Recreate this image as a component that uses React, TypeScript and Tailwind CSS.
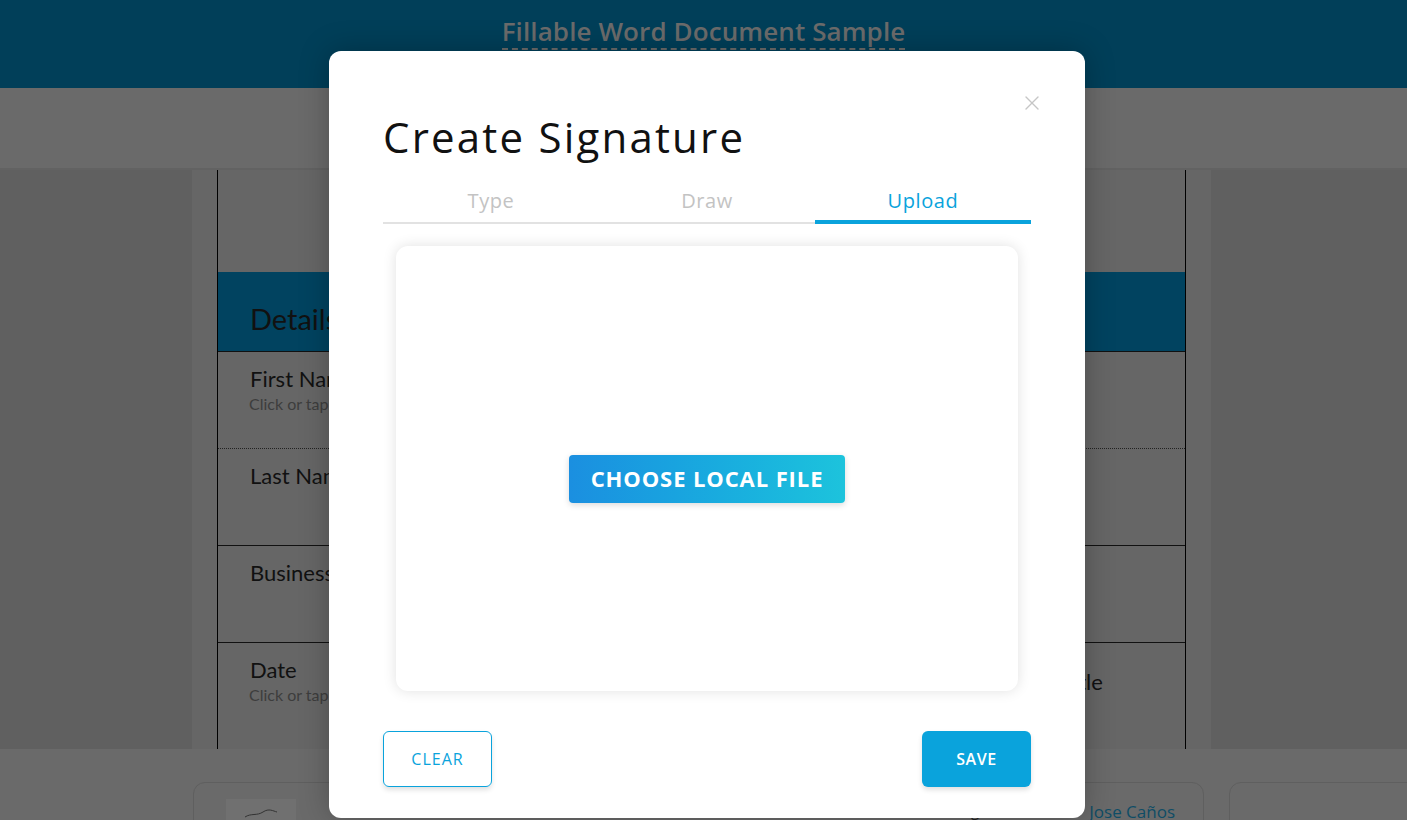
import React from 'react';
import { X } from 'lucide-react';

const rows = [
  { label: 'First Name', hint: 'Click or tap here to enter text.', dotted: true },
  { label: 'Last Name', hint: '', dotted: false },
  { label: 'Business', hint: '', dotted: false },
  { label: 'Date', hint: 'Click or tap to enter a date.', dotted: false, right: 'Title' },
];

const App: React.FC = () => {
  return (
    <div className="relative w-full h-[820px] overflow-hidden bg-[#606060] font-['Open_Sans',sans-serif]">
      {/* header */}
      <div className="h-[88px] bg-[#013f59] flex justify-center pt-[14px]">
        <span className="text-[26px] leading-[34px] font-semibold text-[#6b6b6b] border-b-2 border-dashed border-[#6b6b6b] h-[36px] tracking-[0.1px]">
          Fillable Word Document Sample
        </span>
      </div>
      {/* toolbar */}
      <div className="h-[82px] bg-[#6a6a6a] border-b-2 border-[#626262]" />

      {/* document */}
      <div className="flex justify-center h-[579px]">
        <div className="w-[1019px] ml-[-4px] bg-[#666666] pl-[25px] pr-[25px] overflow-hidden">
          <div className="border-x border-black h-full font-['Lato',sans-serif]">
            <div className="h-[102px]" />
            <div className="h-[79px] bg-[#014360] flex items-center pl-[32px] pt-[14px]">
              <span className="text-[29px] text-[#111]">Details</span>
            </div>
            {rows.map((r, i) => (
              <div
                key={i}
                className={
                  'h-[97px] border-t relative pl-[32px] pt-[12px] ' +
                  (i === 1 ? 'border-dotted border-[#222]' : 'border-[#111]')
                }
              >
                <div className="text-[22px] leading-[30px] text-[#111]">{r.label}</div>
                {r.hint && <div className="text-[16px] leading-[20px] text-[#3d3d3d] ml-[-1px]">{r.hint}</div>}
                {r.right && (
                  <div className="absolute left-[842px] top-[22px] text-[22px] text-[#111]">{r.right}</div>
                )}
              </div>
            ))}
          </div>
        </div>
      </div>

      {/* bottom signatures bar */}
      <div className="h-[71px] bg-[#6a6a6a] flex gap-[25px] pl-[193px] pt-[33px]">
        <div className="w-[1011px] shrink-0 h-[60px] rounded-t-[12px] border border-[#5f5f5f] bg-[#6a6a6a] flex pl-[32px] pr-[28px] pt-[16px]">
          <div className="w-[70px] h-[30px] bg-[#707070] flex items-center justify-center">
            <svg width="40" height="12" viewBox="0 0 40 12">
              <path d="M4 9 C10 5 16 8 22 4 S32 3 36 4" stroke="#333" strokeWidth="1" fill="none" />
            </svg>
          </div>
          <div className="flex-1 flex justify-end gap-[110px] text-[15px] text-[#222]">
            <span>Bank</span>
            <span>Pan Wang</span>
            <span className="text-[#0f4d66] text-[17px]">Jose Caños</span>
          </div>
        </div>
        <div className="w-[200px] shrink-0 h-[60px] rounded-t-[12px] border border-[#5f5f5f]" />
      </div>

      {/* modal */}
      <div className="absolute left-[329px] top-[51px] w-[756px] h-[767px] bg-white rounded-[12px] shadow-[0_0_30px_rgba(0,0,0,0.25)] px-[54px] font-['Open_Sans',sans-serif]">
        <button className="absolute right-[41px] top-[40px] text-[#c6c6c6]">
          <X size={24} strokeWidth={1.4} />
        </button>
        <h1 className="pt-[58px] text-[42px] leading-[56px] text-[#111] tracking-[2.2px]">Create Signature</h1>
        <div className="mt-[19px] flex border-b-2 border-[#e2e2e2]">
          {['Type', 'Draw', 'Upload'].map((t) => (
            <div
              key={t}
              className={
                'flex-1 text-center text-[20px] leading-[34px] pb-[2px] tracking-[0.6px] ' +
                (t === 'Upload' ? 'text-[#0aa3dc] border-b-4 border-[#0aa3dc] mb-[-2px]' : 'text-[#c3c3c3]')
              }
            >
              {t}
            </div>
          ))}
        </div>
        <div className="mt-[9px] h-[470px] p-[13px]">
          <div className="h-[445px] bg-white rounded-[12px] shadow-[0_0_14px_rgba(0,0,0,0.12)] flex items-center justify-center pt-[20px]">
            <button className="w-[276px] h-[48px] rounded-[4px] bg-gradient-to-r from-[#1b8fe0] to-[#1dc3dc] text-white text-[22px] font-bold shadow-[0_2px_6px_rgba(0,0,0,0.15)] tracking-[0.9px]">
              CHOOSE LOCAL FILE
            </button>
          </div>
        </div>
        <div className="mt-[28px] flex justify-between">
          <button className="w-[109px] h-[56px] rounded-[6px] border border-[#0aa3dc] text-[#0aa3dc] text-[16px] tracking-[1px] shadow-[0_3px_5px_rgba(0,0,0,0.12)]">
            CLEAR
          </button>
          <button className="w-[109px] h-[56px] rounded-[6px] bg-[#0aa3dc] text-white text-[16px] font-semibold tracking-[0.6px] shadow-[0_3px_5px_rgba(0,0,0,0.12)]">
            SAVE
          </button>
        </div>
      </div>
    </div>
  );
};

export default App;
